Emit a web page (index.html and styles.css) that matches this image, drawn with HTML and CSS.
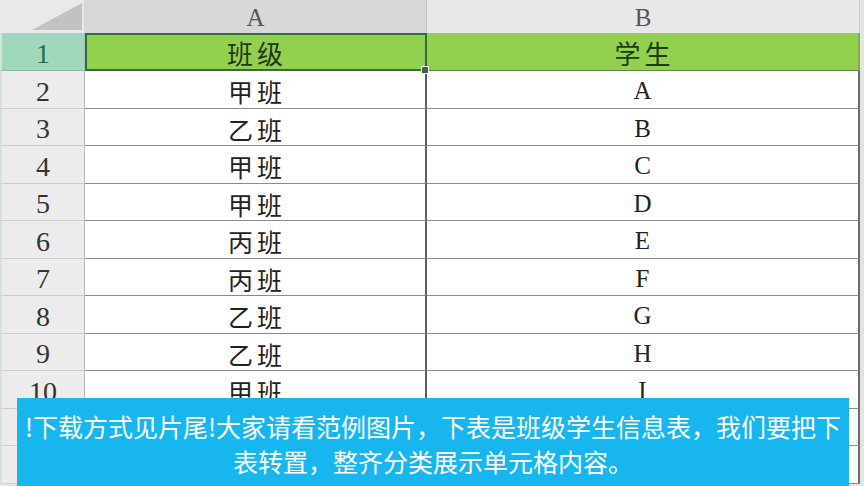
FILE: index.html
```html
<!DOCTYPE html>
<html lang="zh-CN">
<head>
<meta charset="utf-8">
<title>班级学生信息表</title>
<link rel="stylesheet" href="styles.css">
</head>
<body>
<div class="sheet">
  <div class="grid">
    <div class="corner">
      <svg class="tri" width="85" height="32" viewBox="0 0 85 32"><polygon points="32,30 82,3 82,30" fill="#c2c2c2"/></svg>
    </div>
    <div class="colhead sel">A</div>
    <div class="colhead">B</div>

    <div class="rowhead selrow">1</div>
    <div class="cell title active">班级<span class="handle"></span></div>
    <div class="cell title colb">学生</div>

    <div class="rowhead">2</div><div class="cell">甲班</div><div class="cell colb">A</div>
    <div class="rowhead">3</div><div class="cell">乙班</div><div class="cell colb">B</div>
    <div class="rowhead">4</div><div class="cell">甲班</div><div class="cell colb">C</div>
    <div class="rowhead">5</div><div class="cell">甲班</div><div class="cell colb">D</div>
    <div class="rowhead">6</div><div class="cell">丙班</div><div class="cell colb">E</div>
    <div class="rowhead">7</div><div class="cell">丙班</div><div class="cell colb">F</div>
    <div class="rowhead">8</div><div class="cell">乙班</div><div class="cell colb">G</div>
    <div class="rowhead">9</div><div class="cell">乙班</div><div class="cell colb">H</div>
    <div class="rowhead">10</div><div class="cell">甲班</div><div class="cell colb">I</div>
    <div class="rowhead"></div><div class="cell"></div><div class="cell colb"></div>
    <div class="rowhead"></div><div class="cell"></div><div class="cell colb"></div>
  </div>
  <div class="caption">
    <p>!下载方式见片尾!大家请看范例图片，下表是班级学生信息表，我们要把下</p>
    <p>表转置，整齐分类展示单元格内容。</p>
  </div>
</div>
</body>
</html>
```

FILE: styles.css
```css
html, body {
  margin: 0;
  padding: 0;
  width: 864px;
  height: 486px;
  overflow: hidden;
  background: #e4e4e4;
}

.sheet {
  position: relative;
  width: 864px;
  height: 486px;
  overflow: hidden;
}

.grid {
  display: grid;
  grid-template-columns: 85px 342px 433px;
  grid-template-rows: 33px 38px repeat(11, 37.5px);
  width: 860px;
  background: #ffffff;
  font-family: "Liberation Serif", "Noto Sans CJK SC", serif;
  color: #222;
}

.corner {
  background: #e9e9e9;
  border-right: 1px solid #d6d6d6;
}

.tri {
  display: block;
}

.colhead {
  display: flex;
  align-items: center;
  justify-content: center;
  background: #e8e8e8;
  color: #555;
  font-size: 25px;
  padding-top: 2px;
  border-right: 1px solid #cfcfcf;
}

.colhead.sel {
  background: #d8d8d8;
  border-right-color: #c2c2c2;
}

.rowhead {
  display: flex;
  align-items: center;
  justify-content: center;
  background: #ececec;
  color: #333;
  font-size: 28px;
  padding-top: 5px;
  box-sizing: border-box;
  border-bottom: 1px solid #cdcdcd;
  border-right: 1px solid #b8b8b8;
  border-left: 2px solid #d6e3db;
}

.rowhead.selrow {
  background: #9fd8bb;
  color: #2d6b4b;
  border-bottom-color: #7fbf9c;
}

.cell {
  position: relative;
  display: flex;
  align-items: center;
  justify-content: center;
  font-size: 25px;
  letter-spacing: 4px;
  padding-left: 4px;
  padding-top: 4px;
  box-sizing: border-box;
  border-bottom: 1px solid #8c8c8c;
  border-right: 2px solid #5e5e5e;
}

.cell.colb {
  font-size: 25px;
  letter-spacing: 0;
  padding-left: 0;
  border-right: 2px solid #6a6a6a;
}

.cell.title {
  background: #92d050;
  font-size: 26px;
  color: #1f3a12;
  padding-top: 2px;
  border-bottom: 1px solid #5f8a3a;
  border-right-color: #7fb04a;
}

.cell.title.colb {
  letter-spacing: 4px;
  padding-left: 4px;
}

.cell.active {
  outline: 2px solid #2f6e3e;
  outline-offset: -2px;
}

.handle {
  position: absolute;
  right: -4px;
  bottom: -4px;
  width: 6px;
  height: 6px;
  background: #2f6e3e;
  border: 1px solid #ffffff;
  z-index: 2;
}

.caption {
  position: absolute;
  left: 17px;
  top: 398px;
  width: 832px;
  height: 88px;
  background: #18b6ef;
  color: #ffffff;
  font-family: "Noto Sans CJK SC", "Noto Sans", sans-serif;
  font-size: 25px;
  line-height: 35px;
  text-align: center;
  padding-top: 11px;
  box-sizing: border-box;
  z-index: 3;
}

.caption p {
  margin: 0;
  white-space: nowrap;
}
```
